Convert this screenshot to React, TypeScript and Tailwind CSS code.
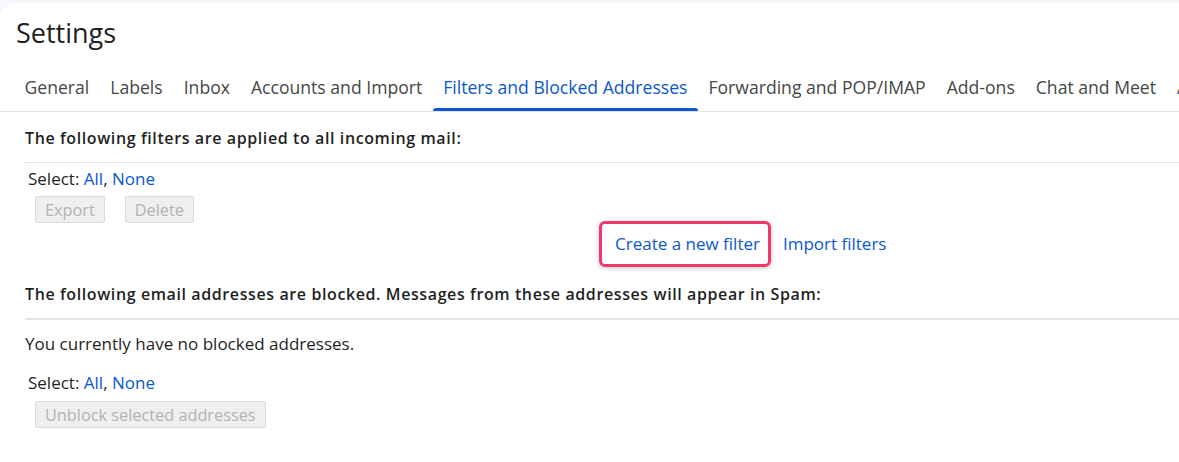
import React from "react";

const tabs = [
  "General",
  "Labels",
  "Inbox",
  "Accounts and Import",
  "Filters and Blocked Addresses",
  "Forwarding and POP/IMAP",
  "Add-ons",
  "Chat and Meet",
  "Advanced",
];

function SelectRow() {
  return (
    <div className="pl-[28px] text-[17px] text-[#1f1f1f] leading-[20px]">
      Select: <span className="text-[#0b57d0] cursor-pointer">All</span>,{" "}
      <span className="text-[#0b57d0] cursor-pointer">None</span>
    </div>
  );
}

function GreyButton({ children }: { children: React.ReactNode }) {
  return (
    <button
      disabled
      className="h-[27px] px-[9px] border border-[#dadada] rounded-[2px] bg-[#efefef] text-[#b3b3b3] text-[16.3px] leading-[24px]"
    >
      {children}
    </button>
  );
}

export default function App() {
  return (
    <div
      className="w-[1179px] h-[462px] bg-[#f6f8fc] pt-[3px] overflow-hidden"
      style={{ fontFamily: '"Open Sans", Roboto, "Liberation Sans", sans-serif' }}
    >
      <div className="h-full bg-white rounded-tl-[16px] overflow-hidden">
        {/* page title */}
        <div className="h-[61px] pl-[16px] pt-[12px] text-[27px] leading-[36px] text-[#1f1f1f]">
          Settings
        </div>

        {/* tab strip */}
        <div className="border-b border-[#e3e3e3] h-[48px] pl-[14px] flex whitespace-nowrap overflow-hidden">
          {tabs.map((t) => {
            const active = t === "Filters and Blocked Addresses";
            return (
              <div
                key={t}
                className={`relative shrink-0 px-[10.5px] pt-[11px] text-[17.6px] leading-[24px] ${
                  active ? "text-[#0b57d0]" : "text-[#444746]"
                }`}
              >
                {t}
                {active && (
                  <span className="absolute left-0 right-0 bottom-0 h-[3px] bg-[#0b57d0] rounded-t-[3px]" />
                )}
              </div>
            );
          })}
        </div>

        {/* filters section */}
        <div className="pl-[25px]">
          <div className="h-[51px] pt-[2px] flex items-center border-b border-[#e3e3e3] text-[16px] tracking-[0.6px] font-semibold text-[#1f1f1f]">
            The following filters are applied to all incoming mail:
          </div>
        </div>
        <div className="pt-[6px]">
          <SelectRow />
          <div className="pl-[35px] mt-[7px] flex gap-[20px]">
            <GreyButton>Export</GreyButton>
            <GreyButton>Delete</GreyButton>
          </div>
          <div className="flex items-center pl-[599px] -mt-[2px] gap-[12px]">
            <div className="h-[46px] pl-[13px] pr-[8px] flex items-center border-[3px] border-[#f0386b] rounded-[6px] shadow-[0_1px_4px_rgba(0,0,0,0.25)] text-[#0b57d0] text-[17px]">
              Create a new filter
            </div>
            <span className="text-[#0b57d0] text-[17px]">Import filters</span>
          </div>
        </div>

        {/* blocked addresses section */}
        <div className="pl-[25px]">
          <div className="h-[53px] pt-[2px] flex items-center border-b-2 border-[#e3e3e3] text-[16px] tracking-[0.6px] font-semibold text-[#1f1f1f]">
            The following email addresses are blocked. Messages from these addresses will appear in Spam:
          </div>
          <div className="h-[48px] flex items-center text-[17px] text-[#1f1f1f]">
            You currently have no blocked addresses.
          </div>
        </div>
        <div className="pt-[5px]">
          <SelectRow />
          <div className="pl-[35px] mt-[8px]">
            <GreyButton>Unblock selected addresses</GreyButton>
          </div>
        </div>
      </div>
    </div>
  );
}
